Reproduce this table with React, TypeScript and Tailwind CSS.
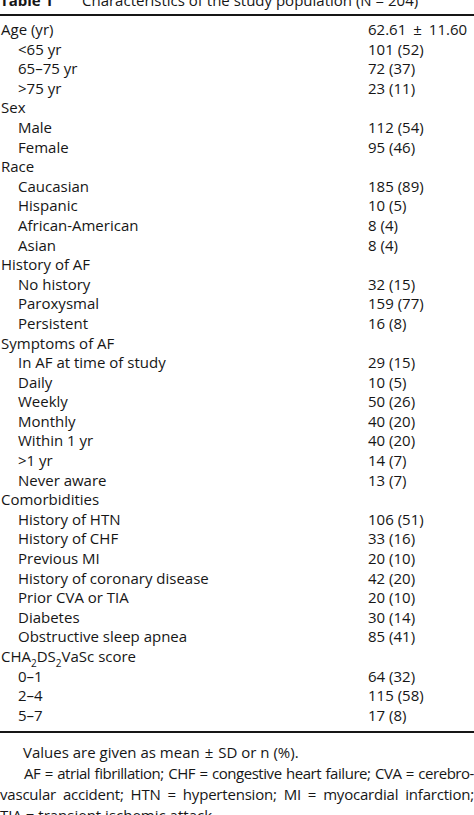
import React from "react"

type Row = { label: React.ReactNode; value?: React.ReactNode; sub?: boolean }

const sub2 = <sub className="text-[10px] align-[-2px]">2</sub>

const rows: Row[] = [
  {
    label: "Age (yr)",
    value: (
      <>
        62.61<span className="px-[7px]">±</span>11.60
      </>
    ),
  },
  { label: "<65 yr", value: "101 (52)", sub: true },
  { label: "65–75 yr", value: "72 (37)", sub: true },
  { label: ">75 yr", value: "23 (11)", sub: true },
  { label: "Sex" },
  { label: "Male", value: "112 (54)", sub: true },
  { label: "Female", value: "95 (46)", sub: true },
  { label: "Race" },
  { label: "Caucasian", value: "185 (89)", sub: true },
  { label: "Hispanic", value: "10 (5)", sub: true },
  { label: "African-American", value: "8 (4)", sub: true },
  { label: "Asian", value: "8 (4)", sub: true },
  { label: "History of AF" },
  { label: "No history", value: "32 (15)", sub: true },
  { label: "Paroxysmal", value: "159 (77)", sub: true },
  { label: "Persistent", value: "16 (8)", sub: true },
  { label: "Symptoms of AF" },
  { label: "In AF at time of study", value: "29 (15)", sub: true },
  { label: "Daily", value: "10 (5)", sub: true },
  { label: "Weekly", value: "50 (26)", sub: true },
  { label: "Monthly", value: "40 (20)", sub: true },
  { label: "Within 1 yr", value: "40 (20)", sub: true },
  { label: ">1 yr", value: "14 (7)", sub: true },
  { label: "Never aware", value: "13 (7)", sub: true },
  { label: "Comorbidities" },
  { label: "History of HTN", value: "106 (51)", sub: true },
  { label: "History of CHF", value: "33 (16)", sub: true },
  { label: "Previous MI", value: "20 (10)", sub: true },
  { label: "History of coronary disease", value: "42 (20)", sub: true },
  { label: "Prior CVA or TIA", value: "20 (10)", sub: true },
  { label: "Diabetes", value: "30 (14)", sub: true },
  { label: "Obstructive sleep apnea", value: "85 (41)", sub: true },
  {
    label: (
      <>
        CHA{sub2}DS{sub2}VaSc score
      </>
    ),
  },
  { label: "0–1", value: "64 (32)", sub: true },
  { label: "2–4", value: "115 (58)", sub: true },
  { label: "5–7", value: "17 (8)", sub: true },
]

export default function App() {
  return (
    <div
      className="w-[474px] h-[815px] overflow-hidden bg-white text-[#161616]"
      style={{ fontFamily: '"Open Sans", "Noto Sans", sans-serif' }}
    >
      {/* Caption, cut off at the top edge */}
      <div className="-mt-[12px] flex h-[24px] items-center whitespace-nowrap text-[15px] leading-[24px]">
        <span className="w-[82px] font-bold">Table 1</span>
        <span>Characteristics of the study population (N = 204)</span>
      </div>
      <div className="mt-[2px] h-[2px] bg-[#161616]" />

      <div className="pt-[4px]">
        {rows.map((r, i) => (
          <div key={i} className="flex h-[19.6px] items-center whitespace-nowrap text-[15px] leading-[19.6px]">
            <span className={`w-[368px] ${r.sub ? "pl-[18px]" : "pl-[1px]"}`}>{r.label}</span>
            <span>{r.value}</span>
          </div>
        ))}
      </div>

      <div className="mt-[6px] h-[2px] bg-[#161616]" />

      {/* Footnotes */}
      <div className="pt-[9px] text-[15px] leading-[21px]">
        <p className="pl-[23px]">
          Values are given as mean<span className="px-[5px]">±</span>SD or n (%).
        </p>
        <p className="pl-[24px] whitespace-nowrap tracking-[-0.45px] text-justify [text-align-last:justify]">
          AF = atrial fibrillation; CHF = congestive heart failure; CVA = cerebro-
        </p>
        <p className="whitespace-nowrap tracking-[-0.2px] text-justify [text-align-last:justify]">
          vascular accident; HTN = hypertension; MI = myocardial infarction;
        </p>
        <p>TIA = transient ischemic attack.</p>
      </div>
    </div>
  )
}
